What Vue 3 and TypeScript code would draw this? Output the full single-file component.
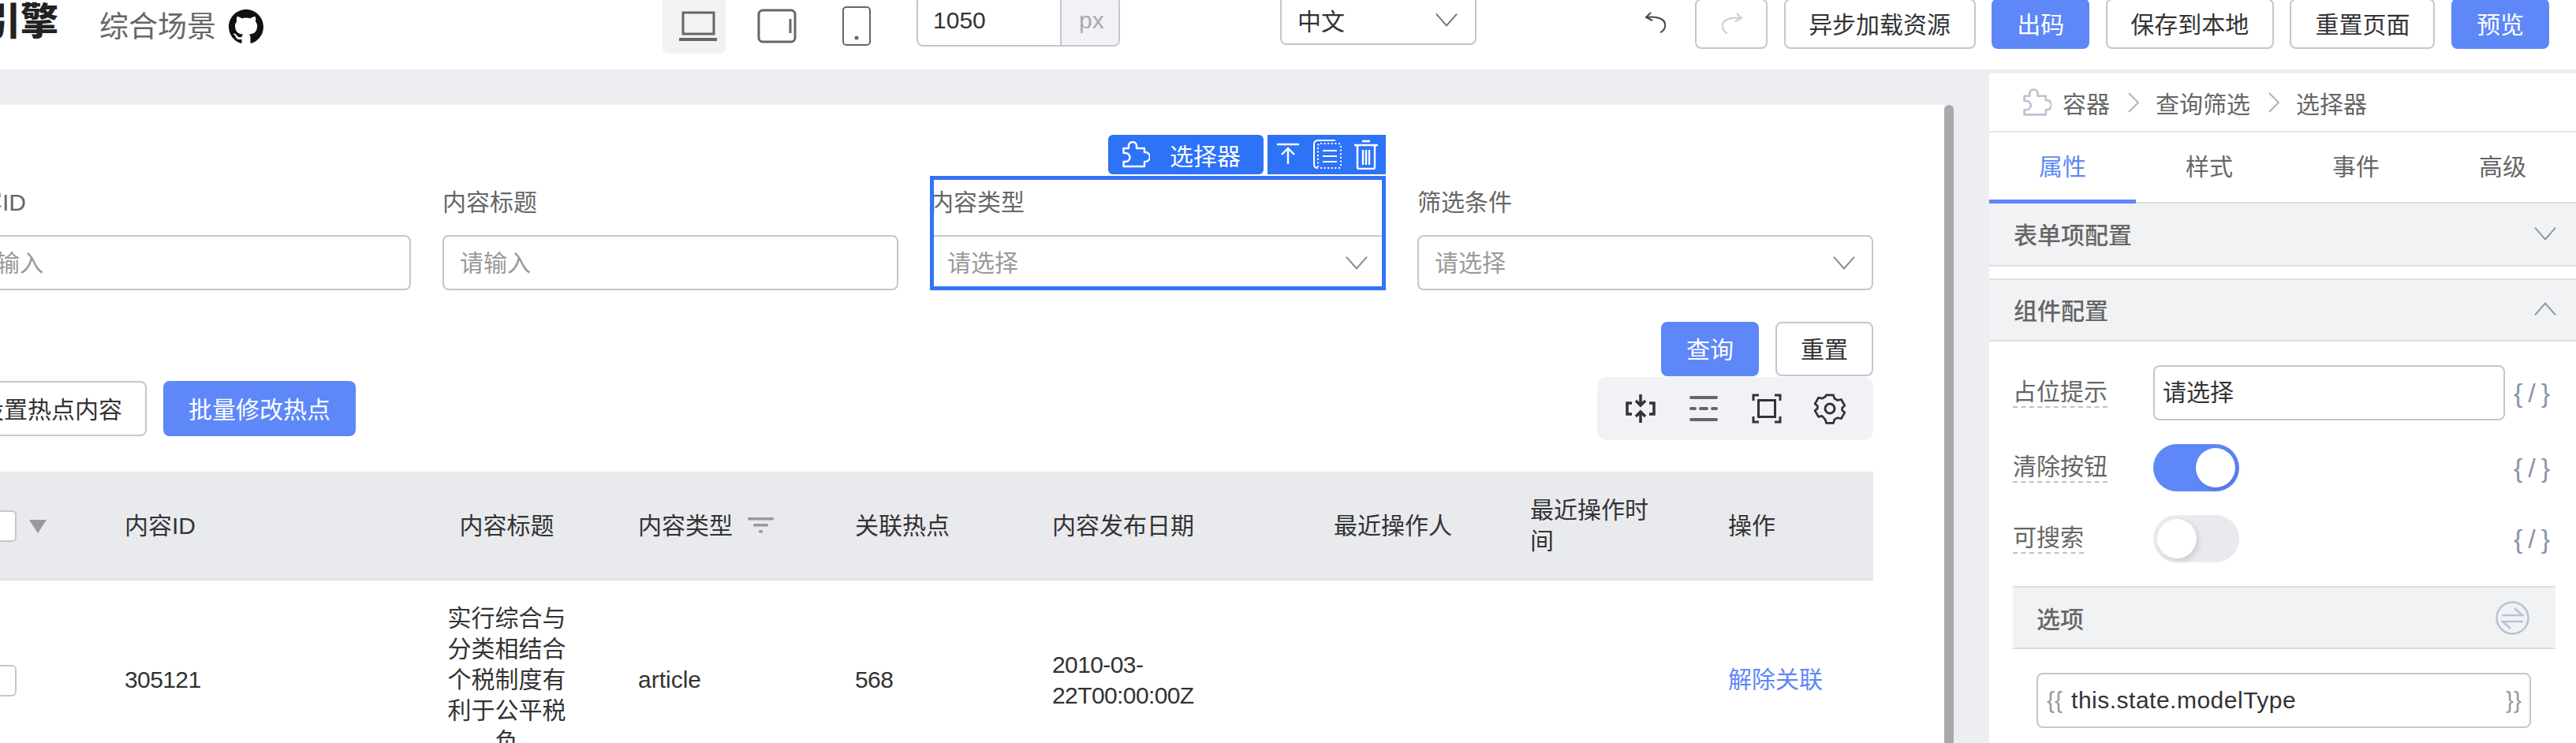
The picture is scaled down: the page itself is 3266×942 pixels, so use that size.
<script setup lang="ts">
interface Field {
  label: string;
  placeholder: string;
  select?: boolean;
  active?: boolean;
}

interface HeaderAction {
  text: string;
  width: number;
  primary?: boolean;
}

const fields: Field[] = [
  { label: '内容ID', placeholder: '请输入' },
  { label: '内容标题', placeholder: '请输入' },
  { label: '内容类型', placeholder: '请选择', select: true, active: true },
  { label: '筛选条件', placeholder: '请选择', select: true },
];

const actions: HeaderAction[] = [
  { text: '异步加载资源', width: 243 },
  { text: '出码', width: 124, primary: true },
  { text: '保存到本地', width: 213 },
  { text: '重置页面', width: 184 },
  { text: '预览', width: 124, primary: true },
];

const tabs = ['属性', '样式', '事件', '高级'];

// mustache braces can't sit literally in the template
const openBrace = '{' + '{';
const closeBrace = '}' + '}';
</script>

<template>
  <div class="page">
    <header class="header">
      <div class="logo">引擎</div>
      <div class="scene">综合场景</div>
      <svg class="github" viewBox="0 0 16 16" fill="#111">
        <path d="M8 0C3.58 0 0 3.58 0 8c0 3.54 2.29 6.53 5.47 7.59.4.07.55-.17.55-.38 0-.19-.01-.82-.01-1.49-2.01.37-2.53-.49-2.69-.94-.09-.23-.48-.94-.82-1.13-.28-.15-.68-.52-.01-.53.63-.01 1.08.58 1.23.82.72 1.21 1.87.87 2.33.66.07-.52.28-.87.51-1.07-1.78-.2-3.64-.89-3.64-3.95 0-.87.31-1.59.82-2.15-.08-.2-.36-1.02.08-2.12 0 0 .67-.21 2.2.82.64-.18 1.32-.27 2-.27s1.36.09 2 .27c1.53-1.04 2.2-.82 2.2-.82.44 1.1.16 1.92.08 2.12.51.56.82 1.27.82 2.15 0 3.07-1.87 3.75-3.65 3.95.29.25.54.73.54 1.48 0 1.07-.01 1.93-.01 2.2 0 .21.15.46.55.38A8.01 8.01 0 0 0 16 8c0-4.42-3.58-8-8-8z" />
      </svg>

      <div class="devices">
        <div class="device is-active">
          <svg viewBox="0 0 80 68" fill="none" stroke="#666" stroke-width="3">
            <rect x="26" y="16" width="39" height="27" />
            <path d="M21 50h48" stroke-width="4" />
          </svg>
        </div>
        <div class="device">
          <svg viewBox="0 0 80 68" fill="none" stroke="#666" stroke-width="3">
            <rect x="22" y="13" width="46" height="40" rx="5" />
            <path d="M62 24v18" />
          </svg>
        </div>
        <div class="device">
          <svg viewBox="0 0 80 68" fill="none" stroke="#666" stroke-width="2">
            <rect x="29" y="9" width="34" height="48" rx="4" />
            <circle cx="46" cy="48" r="1.5" fill="#666" />
          </svg>
        </div>
      </div>

      <div class="width-input">
        <span class="width-value">1050</span>
        <span class="width-unit">px</span>
      </div>

      <div class="locale">
        <span>中文</span>
        <svg class="chevron" viewBox="0 0 30 18" fill="none" stroke="#777" stroke-width="2">
          <path d="M1 1l14 16L29 1" />
        </svg>
      </div>

      <div class="header-right">
        <svg class="undo" viewBox="0 0 30 28" fill="none" stroke="#444" stroke-width="2">
          <path d="M8 2L2 8l8 4" />
          <path d="M2 8c14-2 26 2 24 12-1 4-3 6-6 7" />
        </svg>
        <button class="btn redo" type="button">
          <svg viewBox="0 0 30 28" fill="none" stroke="#ccc" stroke-width="2">
            <path d="M22 2l6 6-8 4" />
            <path d="M28 8C14 6 2 10 4 20c1 4 3 6 6 7" />
          </svg>
        </button>
        <button
          v-for="action in actions"
          :key="action.text"
          class="btn"
          :class="{ 'btn-primary': action.primary }"
          :style="{ width: action.width + 'px' }"
          type="button"
        >
          {{ action.text }}
        </button>
      </div>
    </header>

    <main class="main">
      <section class="stage">
        <div class="canvas">
          <div class="form-grid">
            <div v-for="field in fields" :key="field.label" class="field" :class="{ 'is-selected': field.active }">
              <label class="field-label">{{ field.label }}</label>
              <div class="control">
                <span class="placeholder">{{ field.placeholder }}</span>
                <svg v-if="field.select" class="chevron" viewBox="0 0 30 18" fill="none" stroke="#888" stroke-width="2">
                  <path d="M1 1l14 16L29 1" />
                </svg>
              </div>

              <template v-if="field.active">
                <div class="selection-frame"></div>
                <div class="selection-tools">
                  <div class="selection-name">
                    <svg width="35" height="34" viewBox="0 0 35 34" fill="none" stroke="#fff" stroke-width="2.4" stroke-linejoin="round">
                      <path d="M1.5 9H8V6a5 5 0 0 1 10 0v3h10v5h1a6 6 0 0 1 0 12h-1v6H1.500v-6H4a5.500 5.500 0 0 0 0-11H1.500z" />
                    </svg>
                    <span>选择器</span>
                  </div>
                  <div class="selection-actions">
                    <svg width="30" height="40" viewBox="0 0 30 40" fill="none" stroke="#fff" stroke-width="2.400">
                      <path d="M1 7h28M15 32V13M7 20l8-8 8 8" />
                    </svg>
                    <svg width="36" height="38" viewBox="0 0 36 38" fill="none" stroke="#fff" stroke-width="2">
                      <path d="M6 36C3 36 1 34 1 31V6c0-3 2-5 5-5h22" />
                      <rect x="6" y="5" width="29" height="31" rx="3" stroke-dasharray="2 2.600" />
                      <path d="M12 14h18M12 21h18M12 28h18" />
                    </svg>
                    <svg width="30" height="38" viewBox="0 0 30 38" fill="none" stroke="#fff" stroke-width="2.400">
                      <path d="M0 7h30M10 2h10" />
                      <path d="M4 8v27a2 2 0 0 0 2 2h18a2 2 0 0 0 2-2V8M11 13v19M15 13v19M19 13v19" />
                    </svg>
                  </div>
                </div>
              </template>
            </div>
          </div>

          <div class="query-row">
            <button class="btn btn-primary query-btn" type="button">查询</button>
            <button class="btn query-btn" type="button">重置</button>
          </div>

          <div class="table-bar">
            <div class="batch">
              <button class="btn batch-plain" type="button">设置热点内容</button>
              <button class="btn btn-primary batch-main" type="button">批量修改热点</button>
            </div>
            <div class="table-tools">
              <svg viewBox="0 0 40 40" fill="none" stroke="#333" stroke-width="3.500">
                <path d="M20 2v13M14 10l6 6 6-6M20 38V25M14 30l6-6 6 6" />
                <path d="M9 13H3v14h6M31 13h6v14h-6" />
              </svg>
              <svg viewBox="0 0 40 40" fill="none" stroke="#666" stroke-width="4" stroke-linecap="round">
                <path d="M4 6h32M4 34h32" />
                <path d="M4 20h5M16 20h8M31 20h5" />
              </svg>
              <svg viewBox="0 0 40 40" fill="none" stroke="#333" stroke-width="3">
                <path d="M3 10V3h7M30 3h7v7M37 30v7h-7M10 37H3v-7" />
                <rect x="9.500" y="9.500" width="21" height="21" />
              </svg>
              <svg viewBox="0 0 40 40" fill="none" stroke="#333" stroke-width="3" stroke-linejoin="round">
                <path d="M15 2h10l1.500 5 4.500 2.500 5-1.200 5 8.700-3.600 3 0 3.600 3.600 3-5 8.700-5-1.200-4.500 2.500-1.500 5H15l-1.500-5L9 31.500l-5 1.200-5-8.700 3.600-3V17.400L-1 14.400l5-8.700 5 1.200 4.500-2.500z" transform="translate(2 1) scale(.9)" />
                <circle cx="20" cy="20" r="6" />
              </svg>
            </div>
          </div>

          <table class="data-table">
            <colgroup>
              <col style="width: 191px" />
              <col style="width: 366px" />
              <col style="width: 285px" />
              <col style="width: 275px" />
              <col style="width: 250px" />
              <col style="width: 357px" />
              <col style="width: 249px" />
              <col style="width: 251px" />
              <col style="width: 208px" />
            </colgroup>
            <thead>
              <tr>
                <th class="check-cell">
                  <span class="checkbox"></span>
                  <span class="caret"></span>
                </th>
                <th>内容ID</th>
                <th class="center">内容标题</th>
                <th>
                  <span class="with-icon">
                    内容类型
                    <svg class="filter" viewBox="0 0 34 20" fill="#999">
                      <rect x="0" y="0" width="33" height="3.500" rx="1.500" />
                      <rect x="7" y="8" width="19" height="3.500" rx="1.500" />
                      <rect x="14" y="16" width="5" height="3.500" rx="1.500" />
                    </svg>
                  </span>
                </th>
                <th>关联热点</th>
                <th>内容发布日期</th>
                <th>最近操作人</th>
                <th><div class="wrap-head">最近操作时间</div></th>
                <th>操作</th>
              </tr>
            </thead>
            <tbody>
              <tr>
                <td class="check-cell"><span class="checkbox"></span></td>
                <td class="num">305121</td>
                <td class="center"><div class="title-text">实行综合与分类相结合个税制度有利于公平税负</div></td>
                <td>article</td>
                <td class="num">568</td>
                <td class="num"><div class="date-text">2010-03-22T00:00:00Z</div></td>
                <td></td>
                <td></td>
                <td><a class="link">解除关联</a></td>
              </tr>
            </tbody>
          </table>
        </div>
        <div class="scrollbar"></div>
      </section>

      <aside class="panel">
        <nav class="crumbs">
          <svg width="36" height="36" viewBox="0 0 35 34" fill="none" stroke="#bcc2d0" stroke-width="2.600" stroke-linejoin="round">
            <path d="M1.5 9H8V6a5 5 0 0 1 10 0v3h10v5h1a6 6 0 0 1 0 12h-1v6H1.500v-6H4a5.500 5.500 0 0 0 0-11H1.500z" />
          </svg>
          <span class="crumb first">容器</span>
          <svg class="crumb-sep" viewBox="0 0 14 26" fill="none" stroke="#aab0bc" stroke-width="1.800"><path d="M1 1l12 12L1 25" /></svg>
          <span class="crumb">查询筛选</span>
          <svg class="crumb-sep" viewBox="0 0 14 26" fill="none" stroke="#aab0bc" stroke-width="1.800"><path d="M1 1l12 12L1 25" /></svg>
          <span class="crumb">选择器</span>
        </nav>

        <div class="tabs">
          <div v-for="(tab, i) in tabs" :key="tab" class="tab" :class="{ 'is-active': i === 0 }">{{ tab }}</div>
        </div>

        <div class="section-head">
          <span>表单项配置</span>
          <svg class="chevron" viewBox="0 0 30 18" fill="none" stroke="#8a94b0" stroke-width="2">
            <path d="M1 1l14 16L29 1" />
          </svg>
        </div>
        <div class="section-head second">
          <span>组件配置</span>
          <svg class="chevron" viewBox="0 0 30 18" fill="none" stroke="#8a94b0" stroke-width="2">
            <path d="M1 17L15 1l14 16" />
          </svg>
        </div>

        <div class="props">
          <div class="prop-row input-row">
            <span class="prop-label">占位提示</span>
            <div class="prop-input">请选择</div>
            <span class="binding">{/}</span>
          </div>
          <div class="prop-row">
            <span class="prop-label">清除按钮</span>
            <div class="switch is-on"><span class="knob"></span></div>
            <span class="binding">{/}</span>
          </div>
          <div class="prop-row">
            <span class="prop-label">可搜索</span>
            <div class="switch"><span class="knob"></span></div>
            <span class="binding">{/}</span>
          </div>

          <div class="options-head">
            <span>选项</span>
            <svg width="43" height="43" viewBox="0 0 43 43" fill="none" stroke="#b8c2d6" stroke-width="2.500">
              <circle cx="21.500" cy="21.500" r="20" />
              <path d="M8 18h26L24 9M35 26H9l10 9" />
            </svg>
          </div>

          <div class="expr-input">
            <span class="brace">{{ openBrace }}</span>
            <span class="expr">this.state.modelType</span>
            <span class="brace">{{ closeBrace }}</span>
          </div>
        </div>
      </aside>
    </main>
  </div>
</template>

<style>
html,
body {
  margin: 0;
  background: #fff;
}
</style>

<style scoped>
.page {
  width: 3266px;
  height: 942px;
  overflow: hidden;
  font-family: "Liberation Sans", "Noto Sans CJK SC", sans-serif;
  font-size: 30px;
  color: #333;
  background: #fff;
}

/* Top bar, scrolled up a little in the reference */
.header {
  height: 88px;
  display: flex;
  align-items: flex-start;
  padding-right: 34px;
  box-sizing: border-box;
  background: #fff;
}

.logo {
  margin-left: -22px;
  font-size: 48px;
  line-height: 56px;
  font-weight: 900;
  color: #222;
  white-space: nowrap;
}

.scene {
  margin: 15px 0 0 52px;
  font-size: 37px;
  line-height: 40px;
  color: #666;
  white-space: nowrap;
}

.github {
  width: 44px;
  height: 44px;
  margin: 12px 0 0 16px;
  flex: none;
}

.devices {
  display: flex;
  gap: 20px;
  margin-left: 506px;
}

.device {
  width: 80px;
  height: 68px;
  border-radius: 0 0 8px 8px;
}

.device svg {
  display: block;
  width: 80px;
  height: 68px;
}

.device.is-active {
  background: #f2f2f2;
}

.width-input {
  display: flex;
  width: 258px;
  height: 64px;
  margin: -5px 0 0 42px;
  border: 2px solid #c4c7cf;
  border-radius: 8px;
  box-sizing: border-box;
  overflow: hidden;
  line-height: 58px;
}

.width-value {
  flex: 1;
  padding-left: 19px;
}

.width-unit {
  width: 74px;
  padding-left: 22px;
  box-sizing: border-box;
  border-left: 2px solid #c4c7cf;
  background: #f1f2f6;
  color: #aaa;
}

.locale {
  display: flex;
  align-items: center;
  justify-content: space-between;
  width: 249px;
  height: 64px;
  margin: -7px 0 0 203px;
  padding: 0 22px 0 20px;
  box-sizing: border-box;
  border: 2px solid #c4c7cf;
  border-radius: 8px;
}

.chevron {
  width: 28px;
  height: 18px;
  flex: none;
}

.header-right {
  display: flex;
  align-items: flex-start;
  gap: 20.6px;
  margin-left: auto;
  margin-top: -2px;
}

.undo {
  width: 30px;
  height: 28px;
  margin: 16px 13px 0 0;
}

.btn {
  height: 64px;
  padding: 0 0 3px;
  font: inherit;
  color: #333;
  background: #fff;
  border: 2px solid #c4c7cf;
  border-radius: 8px;
  white-space: nowrap;
}

.btn-primary {
  color: #fff;
  background: #5e87f8;
  border-color: #5e87f8;
}

.redo {
  width: 92px;
}

.redo svg {
  width: 30px;
  height: 28px;
  display: block;
  margin: 0 auto;
}

.main {
  display: grid;
  grid-template-columns: 1fr 744px;
  height: 854px;
  background: #edeef2;
}

/* Canvas */
.stage {
  display: flex;
  margin: 45px 45px 0 0;
  overflow: hidden;
}

.canvas {
  flex: 1;
  min-width: 0;
  padding: 90px 90px 0 0;
  background: #fff;
}

.scrollbar {
  width: 12px;
  background: #a8a9ad;
  border-radius: 6px 6px 0 0;
}

.form-grid {
  display: grid;
  grid-template-columns: repeat(4, 578px);
  gap: 40px;
  margin-left: -57px;
}

.field {
  position: relative;
  padding-top: 14px;
}

.field-label {
  display: block;
  height: 40px;
  margin-bottom: 21px;
  line-height: 40px;
  color: #666;
}

.control {
  display: flex;
  align-items: center;
  justify-content: space-between;
  height: 70px;
  padding: 0 7px 4px 20px;
  box-sizing: border-box;
  border: 2px solid #c4c7cf;
  border-radius: 8px;
}

.control .chevron {
  margin: 4px 14px 0 0;
}

.placeholder {
  color: #999;
}

.selection-frame {
  position: absolute;
  inset: 0;
  border: 5px solid #3273f8;
}

.selection-tools {
  position: absolute;
  right: 0;
  top: -52px;
  display: flex;
  gap: 5px;
  height: 50px;
  color: #fff;
}

.selection-name {
  display: flex;
  align-items: center;
  gap: 25px;
  width: 197px;
  padding-left: 18px;
  box-sizing: border-box;
  background: #2e72f8;
  border-radius: 6px;
  font-size: 30px;
}

.selection-actions {
  display: flex;
  align-items: center;
  gap: 16.5px;
  width: 150px;
  padding-left: 11px;
  box-sizing: border-box;
  background: #2e72f8;
}

.query-row {
  display: flex;
  justify-content: flex-end;
  gap: 21px;
  margin-top: 40px;
}

.query-btn {
  width: 124px;
  height: 69px;
}

.table-bar {
  display: flex;
  align-items: center;
  justify-content: space-between;
  height: 80px;
  margin-top: 1px;
}

.batch {
  display: flex;
  gap: 21px;
  margin-left: -56px;
}

.batch .btn {
  height: 70px;
}

.batch-plain {
  width: 242px;
}

.batch-main {
  width: 244px;
}

.table-tools {
  display: flex;
  align-items: center;
  gap: 40px;
  width: 350px;
  height: 80px;
  padding-left: 35px;
  box-sizing: border-box;
  background: #f1f2f6;
  border-radius: 12px;
}

.table-tools svg {
  width: 40px;
  height: 40px;
}

/* Table */
.data-table {
  width: 2432px;
  margin: 40px 0 0 -57px;
  table-layout: fixed;
  border-collapse: collapse;
  line-height: 39px;
}

.data-table th {
  height: 137px;
  padding: 0 24px;
  box-sizing: border-box;
  font-weight: 400;
  text-align: left;
  background: #e9eaee;
  border-bottom: 2px solid #dcdfe6;
}

.data-table td {
  height: 252px;
  padding: 0 24px;
  box-sizing: border-box;
}

.data-table .center {
  text-align: center;
}

.data-table .check-cell {
  padding-left: 38px;
}

.data-table .num {
  letter-spacing: -0.6px;
}

.checkbox {
  display: inline-block;
  width: 40px;
  height: 40px;
  box-sizing: border-box;
  border: 2px solid #c4c7cf;
  border-radius: 6px;
  background: #fff;
  vertical-align: middle;
}

.caret {
  display: inline-block;
  margin-left: 16px;
  border-left: 11px solid transparent;
  border-right: 11px solid transparent;
  border-top: 17px solid #999;
  vertical-align: middle;
}

.with-icon {
  display: inline-flex;
  align-items: center;
  gap: 19px;
  white-space: nowrap;
}

.filter {
  width: 34px;
  height: 20px;
}

.wrap-head {
  width: 160px;
}

.title-text {
  width: 165px;
  margin: 0 auto;
}

.date-text {
  width: 200px;
}

.link {
  color: #5e87f8;
}

/* Settings panel */
.panel {
  margin-top: 5px;
  background: #fff;
  overflow: hidden;
}

.crumbs {
  display: flex;
  align-items: center;
  height: 75px;
  padding-left: 43px;
  box-sizing: border-box;
  border-bottom: 2px solid #e3e5ea;
  color: #666;
}

.crumb.first {
  margin-left: 14px;
}

.crumb-sep {
  width: 14px;
  height: 26px;
  margin: 0 21px 0 23px;
}

.tabs {
  display: grid;
  grid-template-columns: repeat(4, 186px);
  height: 90px;
  border-bottom: 2px solid #dcdee2;
  box-sizing: border-box;
  line-height: 88px;
  text-align: center;
  color: #666;
}

.tab.is-active {
  height: 90px;
  box-sizing: border-box;
  color: #5e87f8;
  border-bottom: 5px solid #5e87f8;
}

.section-head {
  display: flex;
  align-items: center;
  justify-content: space-between;
  height: 80px;
  padding: 0 25px 2px 31px;
  box-sizing: border-box;
  background: #f1f2f4;
  border-bottom: 2px solid #dcdee2;
  font-weight: 500;
  color: #666;
}

.section-head.second {
  margin-top: 15px;
  border-top: 2px solid #dcdee2;
}

.props {
  padding: 30px 26px 0 30px;
}

.prop-row {
  display: flex;
  align-items: center;
  height: 60px;
  margin-bottom: 30px;
}

.prop-row.input-row {
  height: 70px;
}

.prop-label {
  width: max-content;
  margin-right: auto;
  line-height: 36px;
  border-bottom: 2px dashed #b8c2d6;
  color: #666;
}

.prop-input {
  width: 446px;
  height: 70px;
  padding-left: 10px;
  box-sizing: border-box;
  line-height: 66px;
  border: 2px solid #c4c7cf;
  border-radius: 8px;
}

.binding {
  width: 64px;
  padding-left: 11px;
  box-sizing: border-box;
  font-size: 34px;
  letter-spacing: 7px;
  color: #8a94b0;
  white-space: nowrap;
}

.switch {
  display: flex;
  width: 109px;
  height: 60px;
  margin-right: 337px;
  padding: 5px;
  box-sizing: border-box;
  background: #e9eaee;
  border-radius: 30px;
}

.switch.is-on {
  justify-content: flex-end;
  background: #5e87f8;
}

.knob {
  width: 50px;
  height: 50px;
  background: #fff;
  border-radius: 50%;
  box-shadow: 3px 3px 6px rgba(0, 0, 0, 0.12);
}

.options-head {
  display: flex;
  align-items: center;
  justify-content: space-between;
  height: 80px;
  padding: 0 33px 0 30px;
  box-sizing: border-box;
  background: #f1f2f4;
  border-top: 2px solid #dcdee2;
  border-bottom: 2px solid #dcdee2;
  font-weight: 500;
  color: #666;
}

.expr-input {
  display: flex;
  align-items: center;
  height: 70px;
  margin: 30px 31px 0 30px;
  padding: 0 10px 0 11px;
  box-sizing: border-box;
  border: 2px solid #c4c7cf;
  border-radius: 8px;
}

.expr {
  flex: 1;
  margin-left: 11px;
  letter-spacing: 0.5px;
}

.brace {
  color: #999;
}
</style>
